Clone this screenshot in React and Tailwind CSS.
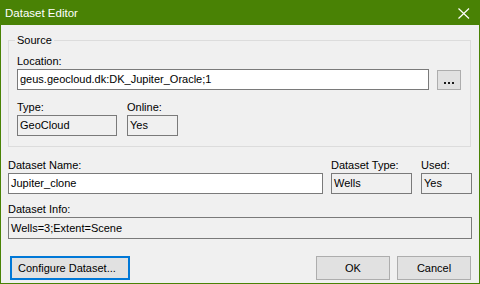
export default function App() {
  const font = { fontFamily: '"Liberation Sans", Arial, sans-serif' };
  return (
    <div className="w-[480px] h-[284px] bg-[#498205] flex flex-col text-[11px] text-black" style={font}>
      {/* title bar */}
      <div className="h-[25px] flex items-center justify-between pl-[5px] pr-[10px] shrink-0">
        <span className="text-white text-[11.5px] leading-[14px] pt-[1px]">Dataset Editor</span>
        <svg width="12" height="11" viewBox="0 0 12 11" className="mt-[1px]">
          <path d="M0.5 0.5L11 10.5M11 0.5L0.5 10.5" stroke="white" strokeWidth="1.2" fill="none" />
        </svg>
      </div>
      {/* client area */}
      <div className="flex-1 mx-[1px] mb-[1px] bg-[#f0f0f0] pl-[7px] pr-[7px] pt-[8px] flex flex-col">
        <fieldset className="border border-[#dcdcdc] pl-[8px] pr-[9px] pb-[10px] mr-[1px]">
          <legend className="px-[2px] ml-[-2px] leading-[14px]">Source</legend>
          <div className="leading-[14px] mt-[7px]">Location:</div>
          <div className="flex items-start mt-[1px]">
            <div className="flex-1 h-[21px] border border-[#7a7a7a] bg-white px-[2px] leading-[19px] whitespace-nowrap">
              geus.geocloud.dk:DK_Jupiter_Oracle;1
            </div>
            <button className="ml-[8px] mt-[1px] w-[24px] h-[20px] border border-[#adadad] bg-[#e1e1e1] flex items-end justify-center pb-[5px]">
              <span className="flex gap-[2px]">
                <span className="w-[2px] h-[2px] bg-[#1a1a1a]"></span>
                <span className="w-[2px] h-[2px] bg-[#1a1a1a]"></span>
                <span className="w-[2px] h-[2px] bg-[#1a1a1a]"></span>
              </span>
            </button>
          </div>
          <div className="flex gap-[10px] mt-[10px]">
            <div className="flex flex-col">
              <div className="leading-[14px] mb-[1px]">Type:</div>
              <div className="w-[100px] h-[21px] border border-[#7a7a7a] px-[2px] leading-[19px]">GeoCloud</div>
            </div>
            <div className="flex flex-col">
              <div className="leading-[14px] mb-[1px]">Online:</div>
              <div className="w-[51px] h-[21px] border border-[#7a7a7a] px-[2px] leading-[19px]">Yes</div>
            </div>
          </div>
        </fieldset>
        <div className="flex mt-[11px]">
          <div className="flex flex-col">
            <div className="leading-[14px] mb-[1px]">Dataset Name:</div>
            <div className="w-[315px] h-[21px] border border-[#7a7a7a] bg-white px-[2px] leading-[19px]">Jupiter_clone</div>
          </div>
          <div className="flex flex-col ml-[8px]">
            <div className="leading-[14px] mb-[1px]">Dataset Type:</div>
            <div className="w-[81px] h-[21px] border border-[#7a7a7a] px-[2px] leading-[19px]">Wells</div>
          </div>
          <div className="flex flex-col ml-[9px]">
            <div className="leading-[14px] mb-[1px]">Used:</div>
            <div className="w-[51px] h-[21px] border border-[#7a7a7a] px-[2px] leading-[19px]">Yes</div>
          </div>
        </div>
        <div className="leading-[14px] mt-[8px]">Dataset Info:</div>
        <div className="h-[22px] border border-[#7a7a7a] px-[2px] leading-[20px] mt-[1px]">Wells=3;Extent=Scene</div>
        <div className="flex mt-[17px] items-start">
          <button className="ml-[2px] w-[120px] h-[24px] border-2 border-[#0078d7] bg-[#e1e1e1] leading-[20px] text-left pl-[6px]">
            Configure Dataset...
          </button>
          <div className="flex-1"></div>
          <button className="w-[74px] h-[24px] border border-[#adadad] bg-[#e1e1e1] leading-[22px]">OK</button>
          <button className="ml-[7px] mr-[1px] w-[74px] h-[24px] border border-[#adadad] bg-[#e1e1e1] leading-[22px]">Cancel</button>
        </div>
      </div>
    </div>
  );
}
